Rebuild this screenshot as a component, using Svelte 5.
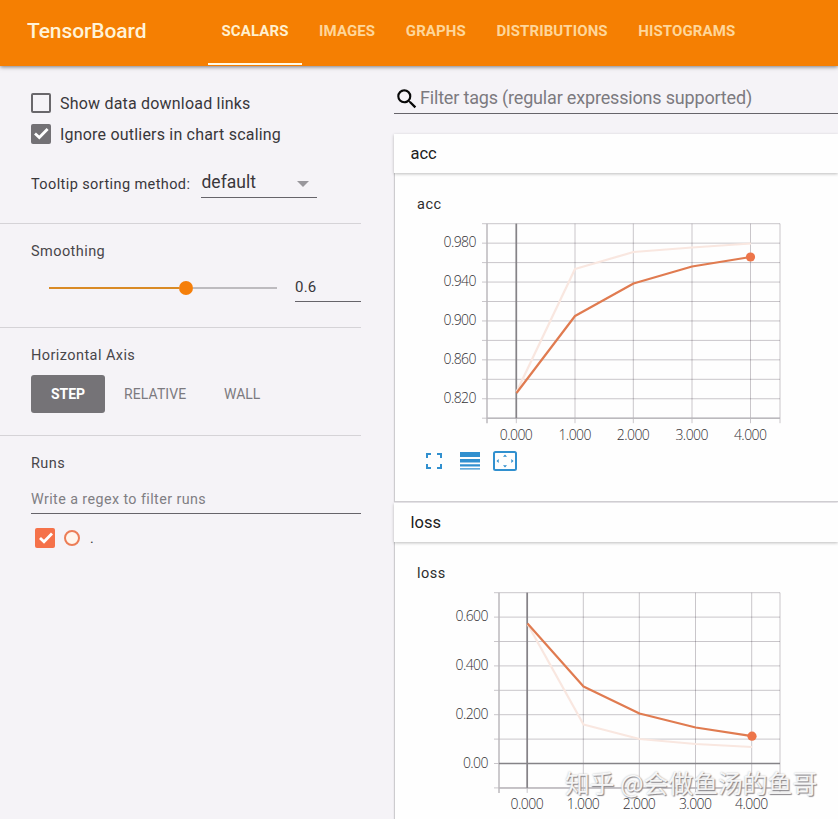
<script>
  const tabs = ['SCALARS', 'IMAGES', 'GRAPHS', 'DISTRIBUTIONS', 'HISTOGRAMS'];

  const charts = [
    {
      name: 'acc',
      left: 70,
      xs: [99.3, 158, 216.3, 275, 333.5],
      rows: 10,
      step: 19.45,
      yLabels: [['0.980', 1], ['0.940', 3], ['0.900', 5], ['0.860', 7], ['0.820', 9]],
      zeroRow: null,
      raw: '99.5,176 158,53 216.5,36 275,31.5 334,27.5',
      smooth: '99.5,177 158,100 216.5,67.5 275,50.5 333.5,41',
      end: [333.5, 41]
    },
    {
      name: 'loss',
      left: 82,
      xs: [110.2, 166.3, 222.3, 278.5, 334.7],
      rows: 8,
      step: 24.4,
      yLabels: [['0.600', 1], ['0.400', 3], ['0.200', 5], ['0.00', 7]],
      zeroRow: 7,
      raw: '110.5,39 166.5,139.5 222.5,154 278.7,159 335,162',
      smooth: '110.5,38.5 166.5,101.5 222.5,128.5 278.7,142.5 335,151.2',
      end: [335, 151.2]
    }
  ];
  const top = 7.7;
  const right = 363;
</script>

<div class="app">
  <header>
    <div class="brand">TensorBoard</div>
    <nav>
      {#each tabs as tab, i}
        <div class="tab" class:active={i === 0}>{tab}</div>
      {/each}
    </nav>
  </header>

  <div class="body">
    <aside>
      <section class="options">
        <div class="check-row"><span class="box"></span><span>Show data download links</span></div>
        <div class="check-row second">
          <span class="box checked">
            <svg viewBox="0 0 20 20"><path d="M4 9.5 8.3 13.5 16.6 5" /></svg>
          </span>
          <span>Ignore outliers in chart scaling</span>
        </div>
        <div class="tooltip-row">
          <span class="tooltip-label">Tooltip sorting method:</span>
          <div class="select"><span>default</span><i></i></div>
        </div>
      </section>

      <section class="smoothing">
        <h3>Smoothing</h3>
        <div class="slider-row">
          <div class="track"><div class="fill"></div><div class="knob"></div><div class="rest"></div></div>
          <div class="value">0.6</div>
        </div>
      </section>

      <section class="axis">
        <h3>Horizontal Axis</h3>
        <div class="buttons">
          <div class="step">STEP</div>
          <div class="relative">RELATIVE</div>
          <div class="wall">WALL</div>
        </div>
      </section>

      <section class="runs">
        <h3>Runs</h3>
        <div class="regex">Write a regex to filter runs</div>
        <div class="run">
          <span class="box orange">
            <svg viewBox="0 0 20 20"><path d="M5 10 9 13.8 17 5.5" /></svg>
          </span>
          <span class="ring"></span>
          <span class="dot">.</span>
        </div>
      </section>
    </aside>

    <main>
      <div class="filter">
        <svg viewBox="0 0 24 24"><path d="M15.5 14h-.79l-.28-.27A6.47 6.47 0 0 0 16 9.5 6.5 6.5 0 1 0 9.5 16c1.61 0 3.09-.59 4.23-1.57l.27.28v.79l5 4.99L20.49 19l-4.99-5zm-6 0C7.01 14 5 11.99 5 9.5S7.01 5 9.5 5 14 7.01 14 9.5 11.99 14 9.5 14z" /></svg>
        <span>Filter tags (regular expressions supported)</span>
      </div>

      {#each charts as c}
        <div class="group">
          <div class="group-head">{c.name}</div>
          <div class="card">
            <div class="title">{c.name}</div>
            <svg class="chart" width="400" height="228" viewBox="0 0 400 228">
              <g class="grid">
                {#each Array(c.rows + 1) as _, r}
                  <line x1={c.left - 5} x2={right} y1={top + r * c.step} y2={top + r * c.step} />
                {/each}
                {#each c.xs as x}
                  <line x1={x} x2={x} y1={top} y2={top + c.rows * c.step + 5} />
                {/each}
                <line x1={right} x2={right} y1={top} y2={top + c.rows * c.step + 5} />
              </g>
              <line class="edge" x1={c.left} x2={c.left} y1={top} y2={top + c.rows * c.step + 5} />
              <line class="edge" x1={c.left} x2={right} y1={top + c.rows * c.step} y2={top + c.rows * c.step} />
              <line class="zero" x1={c.xs[0]} x2={c.xs[0]} y1={top} y2={top + c.rows * c.step} />
              {#if c.zeroRow}
                <line class="zero" x1={c.left} x2={right} y1={top + c.zeroRow * c.step} y2={top + c.zeroRow * c.step} />
              {/if}
              <polyline class="raw" points={c.raw} />
              <polyline class="smooth" points={c.smooth} />
              <circle cx={c.end[0]} cy={c.end[1]} r="4.6" />
              {#each c.yLabels as [label, r]}
                <text x={c.left - 11} y={top + r * c.step + 4.3} text-anchor="end">{label}</text>
              {/each}
              {#each c.xs as x, i}
                <text x={x - 0.3} y="224" text-anchor="middle">{i}.000</text>
              {/each}
            </svg>
            <div class="tools">
              <svg width="18" height="18" viewBox="0 0 18 18"><path class="stroke" d="M2 6V2H6M12 2H16V6M16 12V16H12M6 16H2V12" /></svg>
              <svg width="20" height="18" viewBox="0 0 20 18"><path d="M0 0H20V5H0ZM0 7H20V10.5H0ZM0 12.3H20V14.6H0ZM0 16.2H20V17.6H0Z" /></svg>
              <svg width="24" height="20" viewBox="0 0 24 20"><rect x="1" y="1" width="22" height="18" rx="1.5" /><path d="M10 5.7 12 3.5 14 5.7ZM10 14.3 12 16.5 14 14.3ZM5.7 8 3.5 10 5.7 12ZM18.3 8 20.5 10 18.3 12Z" /></svg>
            </div>
          </div>
        </div>
      {/each}
    </main>
  </div>

  <div class="watermark">知乎 @会做鱼汤的鱼哥</div>
</div>

<style>
  :global(body) { background: #f5f3f7; }
  .app {
    position: relative;
    width: 838px;
    height: 819px;
    overflow: hidden;
    background: #f5f3f7;
    font-family: Roboto, "Liberation Sans", sans-serif;
    color: #39373b;
  }
  .app, .app * { box-sizing: border-box; }
  span, .tab, .brand, .title { white-space: nowrap; }
  header {
    display: flex;
    height: 66px;
    background: #f57f02;
    box-shadow: 0 1px 4px rgba(0, 0, 0, .5);
    position: relative;
    z-index: 2;
  }
  .brand {
    width: 208px;
    padding-left: 27px;
    line-height: 62px;
    font-size: 21px;
    font-weight: 500;
    letter-spacing: -.1px;
    color: #fff3d8;
  }
  nav { display: flex; }
  .tab {
    height: 65px;
    padding: 0 13.5px;
    margin-right: 3.6px;
    line-height: 62px;
    font-size: 15px;
    font-weight: 700;
    letter-spacing: .1px;
    color: #fed69a;
  }
  .tab.active { color: #fff0cf; border-bottom: 2px solid #fffbe8; }

  .body { display: flex; gap: 33px; }
  aside { width: 361px; flex: none; }
  section { border-bottom: 1px solid #d5d3d7; padding-left: 31px; }
  h3 { margin: 0; font-size: 14.5px; font-weight: 400; letter-spacing: .43px; line-height: 22px; height: 20px; color: #48464a; }
  .options { height: 158px; padding-top: 27px; font-size: 16px; letter-spacing: .2px; }
  .check-row { display: flex; align-items: center; gap: 9px; height: 20px; }
  .second { margin-top: 11px; }
  .box { width: 20px; height: 20px; border: 2px solid #69676b; border-radius: 2px; flex: none; }
  .box.checked { background: #737175; border: 0; }
  .box svg { display: block; width: 20px; height: 20px; }
  .box path { fill: none; stroke: #fff; stroke-width: 2.8; }
  .tooltip-row { display: flex; align-items: flex-start; margin-top: 18px; }
  .tooltip-label { width: 170px; padding-top: 13px; font-size: 14.5px; letter-spacing: .4px; line-height: 20px; }
  .select {
    display: flex;
    justify-content: space-between;
    align-items: center;
    width: 116px;
    height: 28px;
    margin-top: 8px;
    padding: 0 8px 3px .5px;
    border-bottom: 1px solid #66646a;
    font-size: 17.5px;
    letter-spacing: 0;
    line-height: 24px;
  }
  .select i { border: 6px solid transparent; border-top-color: #99979c; border-bottom: 0; margin-top: 4px; }

  .smoothing { height: 104px; padding-top: 17px; }
  .slider-row { display: flex; align-items: flex-start; margin-top: 7px; padding-left: 18px; }
  .track { display: flex; align-items: center; width: 228px; height: 14px; margin-top: 13px; }
  .fill { width: 130px; height: 2px; background: #d98a25; }
  .knob { width: 14px; height: 14px; border-radius: 50%; background: #f57f0a; }
  .rest { flex: 1; height: 2px; background: #bdbbbf; }
  .value {
    width: 66px;
    height: 34px;
    margin-left: 18px;
    padding-top: 9px;
    border-bottom: 1px solid #66646a;
    font-size: 15px;
    line-height: 20px;
    letter-spacing: .2px;
  }
  .axis { height: 108px; padding-top: 17px; }
  .buttons { display: flex; align-items: center; margin-top: 10px; height: 38px; font-size: 14px; color: #7c7a7f; }
  .step { width: 74px; height: 38px; border-radius: 3px; background: #757377; color: #fff; font-weight: 700; line-height: 38px; text-align: center; }
  .relative { margin-left: 19px; width: 100px; letter-spacing: .1px; }
  .runs { padding-top: 17px; border-bottom: 0; }
  .regex {
    height: 30px;
    margin-top: 11px;
    padding-top: 5px;
    border-bottom: 1px solid #66646a;
    font-size: 14.3px;
    letter-spacing: .42px;
    line-height: 20px;
    color: #807e83;
  }
  .run { display: flex; align-items: center; height: 20px; margin: 14px 0 0 4px; }
  .box.orange { background: #f5724a; border: 0; border-radius: 2px; }
  .ring { width: 16px; height: 16px; margin-left: 9px; border: 2px solid #ec7d56; border-radius: 50%; background: #fff5ec; }
  .dot { margin-left: 10px; font-size: 14px; }

  main { flex: 1; min-width: 0; padding-top: 18px; }
  .filter { display: flex; height: 30px; border-bottom: 1px solid #66646a; align-items: center; color: #7c7a7f; font-size: 18px; letter-spacing: -.18px; }
  .filter svg { width: 26px; height: 26px; flex: none; fill: #080808; margin-top: 1px; }
  .filter span { margin-top: -3px; }
  .group { height: 369px; }
  .filter + .group { margin-top: 20px; }
  .group-head {
    position: relative;
    height: 39px;
    padding-left: 16.5px;
    background: #fefefe;
    box-shadow: 0 1px 3px rgba(0, 0, 0, .26);
    font-size: 16.5px;
    line-height: 40px;
    color: #202020;
  }
  .card { height: 329px; margin-left: 1px; padding: 20px 0 0 22px; background: #fefefe; border-bottom: 1px solid #d2d0d4; box-shadow: -1px 0 1px rgba(0, 0, 0, .16); }
  .title { height: 23px; font-size: 14.5px; letter-spacing: .5px; line-height: 24px; color: #2d2d2d; }
  .chart { display: block; }
  .chart line { stroke-width: 1; }
  .grid line { stroke: #1a0f1f; stroke-opacity: .23; }
  .chart .edge { stroke: #bbb9bd; stroke-width: 1.5; }
  .chart .zero { stroke: #858387; stroke-width: 1.7; }
  polyline { fill: none; stroke-width: 2.2; stroke-linejoin: round; }
  .raw { stroke: #f9e7e0; }
  .smooth { stroke: #e07b50; }
  circle { fill: #ed754a; }
  text { font-family: "Open Sans", "Noto Sans", sans-serif; font-size: 14px; font-weight: 300; letter-spacing: -.55px; fill: #343236; }
  .tools { display: flex; align-items: center; height: 20px; margin: 7px 0 0 8px; fill: #3190cf; }
  .tools svg:nth-child(2) { margin-left: 17px; }
  .tools svg:nth-child(3) { margin-left: 13px; }
  .stroke, .tools rect { fill: none; stroke: #3190cf; stroke-width: 2; }
  .watermark {
    position: absolute;
    left: 565px;
    top: 765px;
    z-index: 3;
    font-family: "Noto Sans CJK SC", sans-serif;
    font-size: 24.8px;
    line-height: 35px;
    white-space: nowrap;
    color: rgba(255, 255, 255, .88);
    text-shadow: 1px 1px 1px #88868b, 0 0 2px #bbb;
  }
</style>
